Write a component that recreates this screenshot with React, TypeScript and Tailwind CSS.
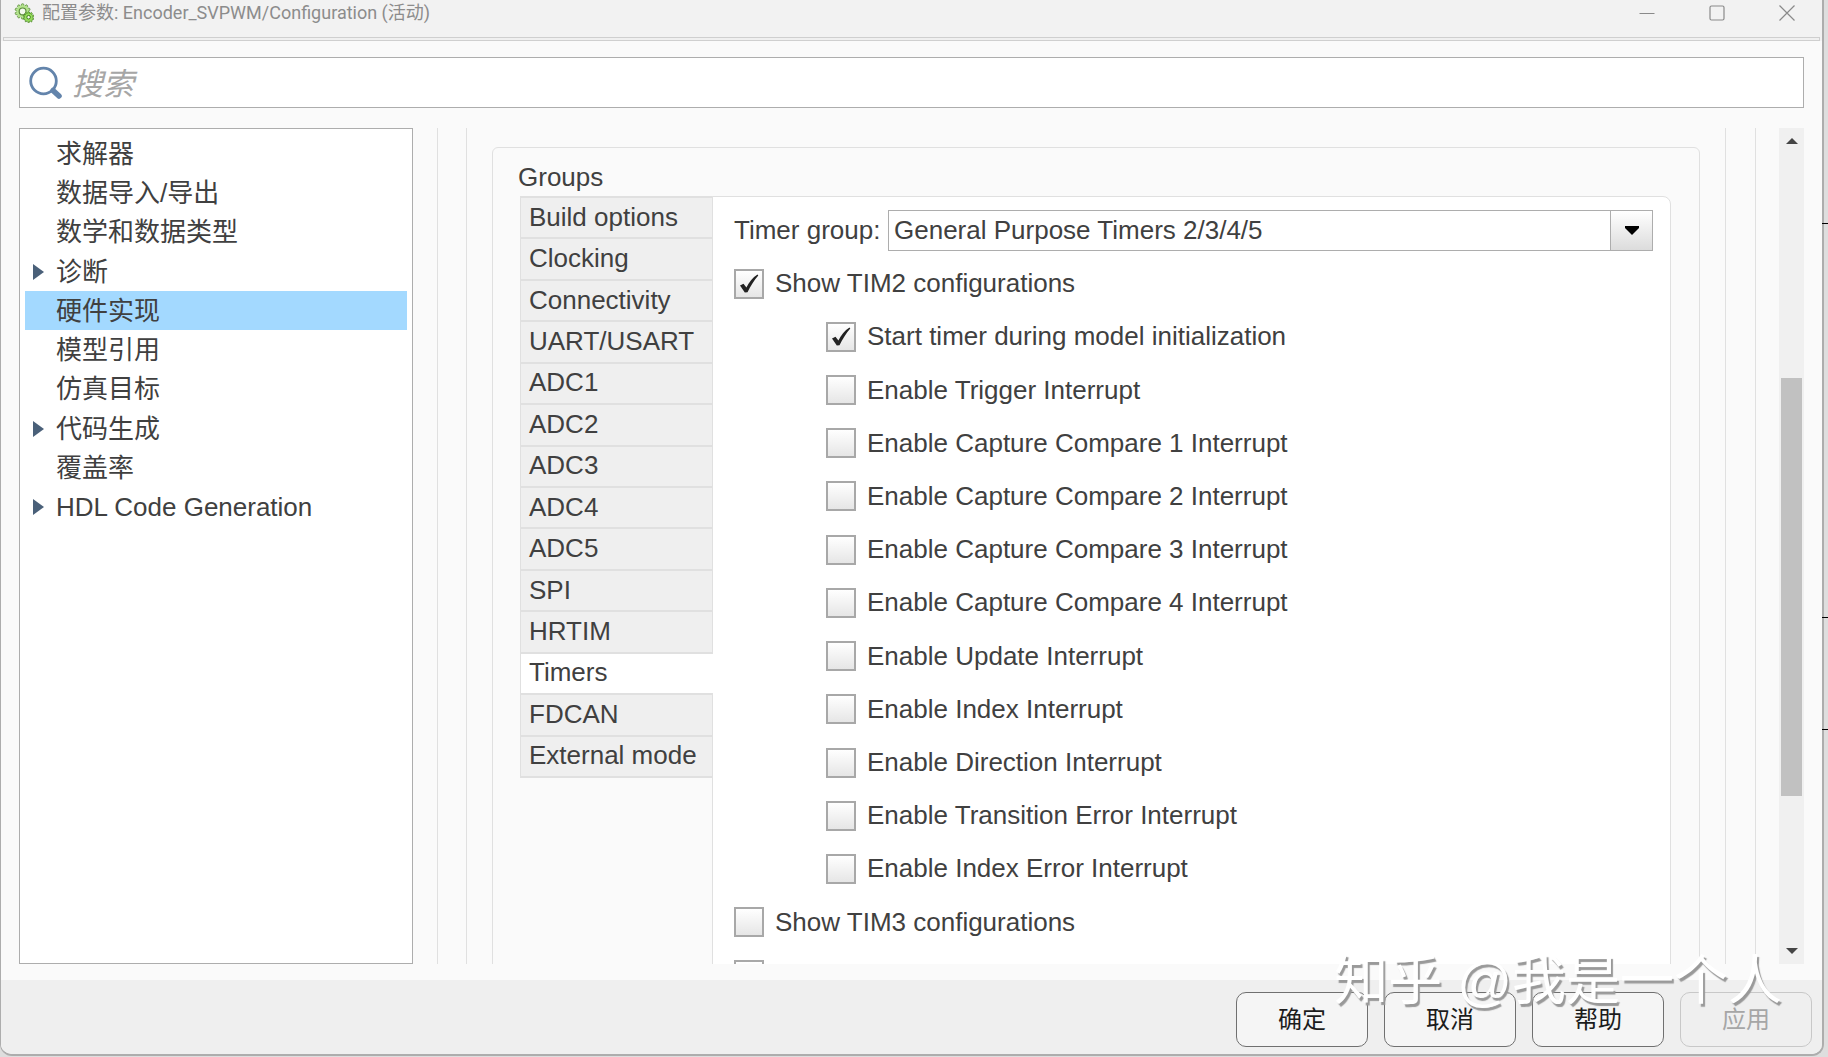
import React, { useState } from "react";

const tree = [
  { name: "求解器" },
  { name: "数据导入/导出" },
  { name: "数学和数据类型" },
  { name: "诊断", parent: true },
  { name: "硬件实现" },
  { name: "模型引用" },
  { name: "仿真目标" },
  { name: "代码生成", parent: true },
  { name: "覆盖率" },
  { name: "HDL Code Generation", parent: true },
];

const groups = [
  "Build options", "Clocking", "Connectivity", "UART/USART", "ADC1", "ADC2", "ADC3",
  "ADC4", "ADC5", "SPI", "HRTIM", "Timers", "FDCAN", "External mode",
];

type OptionProps = { label: string; nested?: boolean; on?: boolean; collapsed?: boolean };

const options: OptionProps[] = [
  { label: "Show TIM2 configurations", on: true },
  { label: "Start timer during model initialization", nested: true, on: true },
  { label: "Enable Trigger Interrupt", nested: true },
  { label: "Enable Capture Compare 1 Interrupt", nested: true },
  { label: "Enable Capture Compare 2 Interrupt", nested: true },
  { label: "Enable Capture Compare 3 Interrupt", nested: true },
  { label: "Enable Capture Compare 4 Interrupt", nested: true },
  { label: "Enable Update Interrupt", nested: true },
  { label: "Enable Index Interrupt", nested: true },
  { label: "Enable Direction Interrupt", nested: true },
  { label: "Enable Transition Error Interrupt", nested: true },
  { label: "Enable Index Error Interrupt", nested: true },
  { label: "Show TIM3 configurations" },
  { label: "Show TIM4 configurations", collapsed: true },
];

function GearIcon() {
  const teeth = Array.from({ length: 10 }, (_, i) => i * 36);
  return (
    <svg viewBox="0 0 20 20" className="size-5 shrink-0" aria-hidden="true">
      {teeth.map((a) => (
        <rect key={a} x="7.4" y="0.8" width="2.4" height="3.2" rx="0.8" fill="#b4e48c" stroke="#5a8a3c" strokeWidth="0.8" transform={`rotate(${a} 8.6 8.4)`} />
      ))}
      <circle cx="8.6" cy="8.4" r="6.2" fill="#b4e48c" />
      <circle cx="8.6" cy="8.4" r="3.4" fill="#f2f9ec" stroke="#5a8a3c" strokeWidth="1.2" />
      {teeth.map((a) => (
        <rect key={a} x="13.8" y="8.8" width="1.6" height="2.6" rx="0.5" fill="#96e05a" stroke="#3f7a1c" strokeWidth="0.7" transform={`rotate(${a} 14.6 14.2)`} />
      ))}
      <circle cx="14.6" cy="14.2" r="3.8" fill="#96e05a" />
      <circle cx="14.6" cy="14.2" r="1.8" fill="#f2f9ec" stroke="#3f7a1c" strokeWidth="1" />
    </svg>
  );
}

function Option({ label, nested, on, collapsed }: OptionProps) {
  const [checked, setChecked] = useState(!!on);
  return (
    <label className={nested ? "flex items-center gap-[11px] pl-[92px]" : "flex items-center gap-[11px]"}>
      <span className="relative block size-[30px] shrink-0">
        <input
          type="checkbox"
          aria-label={label}
          checked={checked}
          onChange={() => setChecked(!checked)}
          className="block size-[30px] appearance-none border-2 border-[#a8a8a8] bg-linear-to-b from-white to-[#e6e6e6]"
        />
        {checked && (
          <svg viewBox="0 0 30 30" className="pointer-events-none absolute inset-0 size-[30px]" aria-hidden="true">
            <path d="M6 16.500 L9.500 14.800 L12.400 18.500 C15 13.500 18.500 8.500 23.500 5.500 L24.300 6.500 C20 11.500 16.500 17 13.500 23.200 L10.800 23.600 Z" fill="#222" />
          </svg>
        )}
      </span>
      {!collapsed && <span>{label}</span>}
    </label>
  );
}

export default function App() {
  const [page, setPage] = useState("硬件实现");
  const [group, setGroup] = useState("Timers");
  return (
    <div className="relative h-screen overflow-hidden bg-[#dedede] pr-1 pb-px font-['Liberation_Sans','Noto_Sans_CJK_SC',sans-serif] text-[26px] text-[#404040]">
      <div className="flex h-full flex-col overflow-hidden rounded-b-xl border-r-2 border-b-2 border-l border-[#adadad] bg-[#fafafa]">
        <header className="flex h-[41px] shrink-0 items-start justify-between bg-[#f2f2f2] pl-[13px]">
          <div className="flex h-[25px] items-center gap-2 font-[Roboto,'Noto_Sans_CJK_SC',sans-serif] text-[18px] leading-6 text-[#8c8c8c]">
            <GearIcon />
            <h1>配置参数: Encoder_SVPWM/Configuration (活动)</h1>
          </div>
          <div className="flex h-[25px] items-center">
            <button aria-label="最小化" className="flex w-[70px] justify-center">
              <svg viewBox="0 0 16 16" className="size-4"><path d="M0.500 8.500H15.500" stroke="#8a8a8a" /></svg>
            </button>
            <button aria-label="最大化" className="flex w-[70px] justify-center">
              <svg viewBox="0 0 16 16" className="size-4"><rect x="1" y="1" width="14" height="14" rx="1.500" fill="none" stroke="#8a8a8a" strokeWidth="1.200" /></svg>
            </button>
            <button aria-label="关闭" className="flex w-[70px] justify-center">
              <svg viewBox="0 0 16 16" className="size-4"><path d="M0.500 0.500L15.500 15.500M15.500 0.500L0.500 15.500" stroke="#8a8a8a" strokeWidth="1.200" /></svg>
            </button>
          </div>
        </header>
        <div className="mx-0.5 -mt-1 h-1 shrink-0 border border-[#cfcfcf] bg-[#f0f0f0]" />

        <label className="mx-[18px] mt-4 flex h-[51px] shrink-0 items-center gap-2 border border-[#adadad] bg-white pl-2">
          <svg viewBox="0 0 36 36" className="size-9 shrink-0" aria-hidden="true">
            <circle cx="15.500" cy="16" r="12.800" fill="none" stroke="#6384ab" strokeWidth="2.800" />
            <path d="M25 25.500L31 31" stroke="#6384ab" strokeWidth="5.500" strokeLinecap="round" />
          </svg>
          <input aria-label="搜索" placeholder="搜索" className="h-full min-w-0 flex-1 pt-1 text-[31px] italic outline-none placeholder:text-[#a6a6a6]" />
        </label>

        <main className="mx-[18px] mt-5 mb-4 flex min-h-0 flex-1">
          <nav className="w-[394px] shrink-0 border border-[#adadad] bg-white px-[5px] pt-[5px]">
            <ul className="grid h-[393px] auto-rows-fr">
              {tree.map((t) => (
                <li key={t.name} className="flex min-h-0">
                  <button
                    onClick={() => setPage(t.name)}
                    className={page === t.name ? "flex w-full items-center bg-[#a3d9ff] text-left leading-none" : "flex w-full items-center text-left leading-none"}
                  >
                    <span className="flex w-[31px] shrink-0 pl-2">
                      {t.parent && (
                        <svg viewBox="0 0 11 16" className="h-4 w-[11px]" aria-hidden="true"><path d="M0 0L11 8L0 16Z" fill="#4a6079" /></svg>
                      )}
                    </span>
                    {t.name}
                  </button>
                </li>
              ))}
            </ul>
          </nav>

          <section className="ml-6 flex min-w-0 flex-1 border-x border-[#e0e0e0]">
            <div className="mr-[29px] ml-7 flex min-w-0 flex-1 overflow-hidden border-x border-[#e0e0e0] px-[25px] pt-[19px]">
              <div className="h-[1040px] min-w-0 flex-1 rounded-md border border-[#e0e0e0] pt-3 pr-7 pl-[25px]">
                <h2 className="pb-0.5 leading-[34px]">Groups</h2>
                <div className="ml-0.5 flex h-full">
                  <div role="tablist" className="grid h-[582px] w-[193px] shrink-0 auto-rows-fr border-t border-b border-l border-[#e0e0e0]">
                    {groups.map((g) => (
                      <button
                        key={g}
                        role="tab"
                        aria-selected={group === g}
                        onClick={() => setGroup(g)}
                        className={
                          group === g
                            ? "z-10 min-h-0 border-y border-[#e0e0e0] bg-white pb-0.5 pl-2 text-left leading-none"
                            : "min-h-0 border-y border-[#e0e0e0] bg-[#efefef] pb-0.5 pl-2 text-left leading-none"
                        }
                      >
                        {g}
                      </button>
                    ))}
                  </div>
                  <div role="tabpanel" className="-ml-px min-w-0 flex-1 rounded-tr-lg border border-[#e0e0e0] bg-white pt-[13px] pr-[17px] pl-[21px]">
                    <div className="flex items-center">
                      <label htmlFor="timer-group" className="w-[154px] shrink-0">Timer group:</label>
                      <div className="relative h-[41px] min-w-0 flex-1">
                        <select id="timer-group" className="h-full w-full appearance-none border border-[#adadad] bg-white pb-0.5 pl-[5px]">
                          <option>General Purpose Timers 2/3/4/5</option>
                        </select>
                        <span className="pointer-events-none absolute inset-y-px right-px flex w-[42px] items-center justify-center border-l border-[#adadad] bg-linear-to-b from-white to-[#dcdcdc]">
                          <svg viewBox="0 0 14 9" className="h-[9px] w-3.5" aria-hidden="true"><path d="M0 0H14V2L7 9L0 2Z" fill="#000" /></svg>
                        </span>
                      </div>
                    </div>
                    <div className="mt-1.5 grid h-[745px] auto-rows-fr">
                      {options.map((o) => (
                        <Option key={o.label} {...o} />
                      ))}
                    </div>
                  </div>
                </div>
              </div>
            </div>
          </section>

          <div className="ml-[23px] flex w-[25px] shrink-0 flex-col items-center bg-[#f0f0f0] py-2.5" aria-hidden="true">
            <svg viewBox="0 0 12 6" className="h-1.5 w-3 shrink-0"><path d="M0 6L6 0L12 6Z" fill="#454545" /></svg>
            <div className="flex-[234]" />
            <div className="w-[21px] flex-[418] bg-[#c1c1c1]" />
            <div className="flex-[152]" />
            <svg viewBox="0 0 12 6" className="h-1.5 w-3 shrink-0"><path d="M0 0L6 6L12 0Z" fill="#454545" /></svg>
          </div>
        </main>

        <footer className="flex shrink-0 justify-end gap-4 bg-[#efefef] pt-3 pr-2.5 pb-[7px] text-2xl text-[#1c1c1c]">
          {["确定", "取消", "帮助"].map((b) => (
            <button key={b} className="h-[55px] w-[132px] rounded-[10px] border border-[#707070] bg-[#f5f5f5]">{b}</button>
          ))}
          <button disabled className="h-[55px] w-[132px] rounded-[10px] border border-[#c8c8c8] text-[#a6a6a6]">应用</button>
        </footer>
      </div>

      <div className="absolute top-[223px] right-0 h-px w-1.5 bg-black" />
      <div className="absolute top-[617px] right-0 h-px w-1.5 bg-black" />
      <div className="absolute top-[729px] right-0 h-px w-1.5 bg-black" />
      <p className="pointer-events-none absolute right-[46px] bottom-[41px] text-[54px] leading-[70px] whitespace-nowrap text-white [text-shadow:2px_3px_1px_#999]">知乎 @我是一个人</p>
    </div>
  );
}
